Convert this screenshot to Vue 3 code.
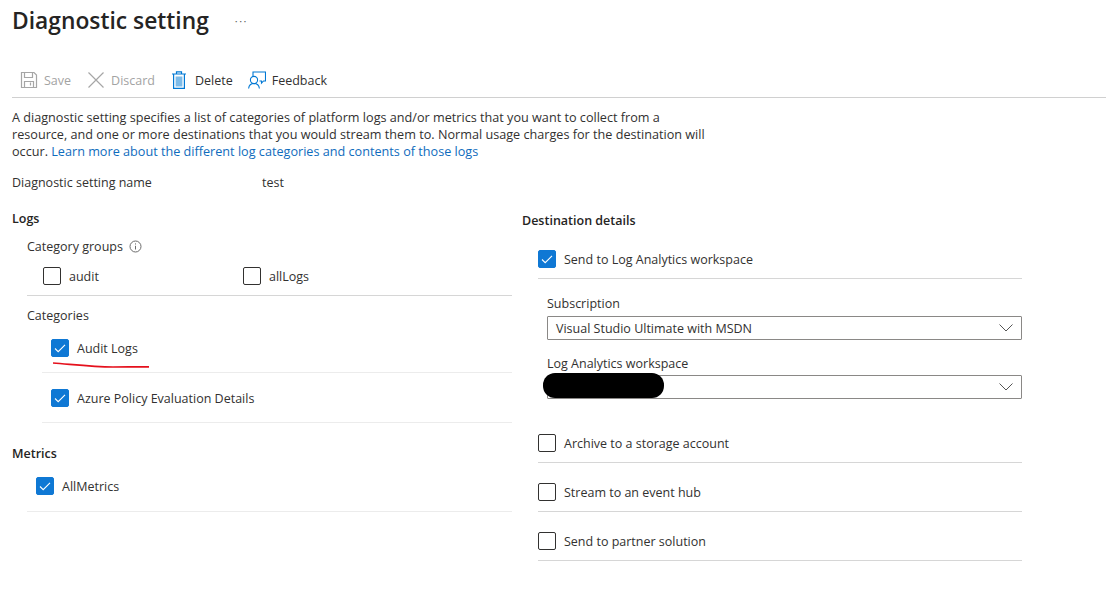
<script setup>
const description = 'A diagnostic setting specifies a list of categories of platform logs and/or metrics that you want to collect from a resource, and one or more destinations that you would stream them to. Normal usage charges for the destination will occur.'
const destinations = ['Archive to a storage account', 'Stream to an event hub', 'Send to partner solution']
</script>

<template>
  <div class="page">
    <header class="title-row">
      <h1>Diagnostic setting</h1>
      <span class="more">···</span>
    </header>

    <div class="toolbar">
      <div class="tool off">
        <svg width="18" height="18" viewBox="0 0 18 18" fill="none" stroke="#a6a6a6" stroke-width="1.2">
          <path d="M1.5 1.5h12.5l2.5 2.5v12.5h-15z" />
          <path d="M4.5 1.5v5h8v-5M4.5 16.5v-6h9v6M10.5 11.5v3" />
        </svg>
        <span>Save</span>
      </div>
      <div class="tool off discard">
        <svg width="18" height="18" viewBox="0 0 18 18" fill="none" stroke="#a6a6a6" stroke-width="1.2">
          <path d="M1.5 1.5l15 15M16.5 1.5l-15 15" />
        </svg>
        <span>Discard</span>
      </div>
      <div class="tool delete">
        <svg width="14" height="18" viewBox="0 0 14 18" fill="none" stroke="#0078d4" stroke-width="1.2">
          <path d="M0 3h14M4.5 3V.8h5V3M1.6 3v14.4h10.8V3" />
          <rect x="3.600" y="5.500" width="6.800" height="10" fill="#7dbbe8" stroke="none" />
        </svg>
        <span>Delete</span>
      </div>
      <div class="tool">
        <svg width="18" height="18" viewBox="0 0 18 18" fill="none" stroke="#0078d4" stroke-width="1.1">
          <path d="M5 5V1h12.500v9h-2l-2 2.200V10h-2" />
          <circle cx="6" cy="9" r="3.600" />
          <path d="M.6 17.500c.4-3.400 2.600-5 5.400-5s5 1.600 5.400 5" />
        </svg>
        <span>Feedback</span>
      </div>
    </div>

    <p class="intro">
      {{ description }}
      <a href="#">Learn more about the different log categories and contents of those logs</a>
    </p>

    <div class="name-row">
      <span class="name-label">Diagnostic setting name</span>
      <span>test</span>
    </div>

    <div class="columns">
      <section class="left">
        <h2 class="logs-head">Logs</h2>
        <div class="groups-label">
          Category groups
          <svg width="13" height="13" viewBox="0 0 13 13" fill="none" stroke="#6b6b6b">
            <circle cx="6.500" cy="6.500" r="5.500" />
            <path d="M6.500 5.800v3.700M6.500 3.400v1.100" />
          </svg>
        </div>
        <div class="groups">
          <label class="check group"><span class="box"></span>audit</label>
          <label class="check group"><span class="box"></span>allLogs</label>
        </div>
        <div class="cat-label">Categories</div>
        <div class="cat-row first">
          <label class="check"><span class="box on"><svg width="14" height="14" viewBox="0 0 14 14"><path d="M2 7.500l3.200 3.200L12 3.800" fill="none" stroke="#fff" stroke-width="1.1" /></svg></span>Audit Logs</label>
          <svg class="scribble" width="100" height="8" viewBox="0 0 100 8">
            <path d="M1 2c20 1.500 40 3.800 60 4 12 0 25-.3 36-.2" fill="none" stroke="#e5101c" stroke-width="1.700" />
          </svg>
        </div>
        <div class="cat-row second">
          <label class="check"><span class="box on"><svg width="14" height="14" viewBox="0 0 14 14"><path d="M2 7.500l3.200 3.200L12 3.800" fill="none" stroke="#fff" stroke-width="1.1" /></svg></span>Azure Policy Evaluation Details</label>
        </div>
        <h2 class="metrics-head">Metrics</h2>
        <div class="metric-row">
          <label class="check"><span class="box on"><svg width="14" height="14" viewBox="0 0 14 14"><path d="M2 7.500l3.200 3.200L12 3.800" fill="none" stroke="#fff" stroke-width="1.1" /></svg></span>AllMetrics</label>
        </div>
      </section>

      <section class="right">
        <h2 class="dest-head">Destination details</h2>
        <div class="dest">
          <label class="check"><span class="box on"><svg width="14" height="14" viewBox="0 0 14 14"><path d="M2 7.500l3.200 3.200L12 3.800" fill="none" stroke="#fff" stroke-width="1.1" /></svg></span>Send to Log Analytics workspace</label>
        </div>
        <div class="fields">
          <div class="field-label">Subscription</div>
          <div class="select">
            <span>Visual Studio Ultimate with MSDN</span>
            <svg width="14" height="8" viewBox="0 0 14 8"><path d="M.5.5L7 7l6.500-6.500" fill="none" stroke="#555" /></svg>
          </div>
          <div class="field-label second-label">Log Analytics workspace</div>
          <div class="select masked">
            <span class="blob"></span>
            <svg width="14" height="8" viewBox="0 0 14 8"><path d="M.5.5L7 7l6.500-6.500" fill="none" stroke="#555" /></svg>
          </div>
        </div>
        <div v-for="d in destinations" :key="d" class="dest plain">
          <label class="check"><span class="box"></span>{{ d }}</label>
        </div>
      </section>
    </div>
  </div>
</template>

<style>
html, body {
  background: #fff;
}
</style>

<style scoped>
.page {
  width: 1106px;
  height: 606px;
  overflow: hidden;
  box-sizing: border-box;
  font-family: "Open Sans", "Noto Sans", sans-serif;
  font-size: 12.500px;
  line-height: 17px;
  color: #323130;
}
.title-row {
  display: flex;
  align-items: center;
  height: 44px;
  padding: 0 0 4px 12px;
  box-sizing: border-box;
}
h1 {
  margin: 0;
  font-size: 22.800px;
  font-weight: 600;
  color: #252423;
}
.more {
  margin-left: 26px;
  font-size: 11px;
  letter-spacing: 1.500px;
  color: #605e5c;
}
.toolbar {
  display: flex;
  align-items: center;
  height: 36px;
  margin: 18px 0 0 12px;
  padding: 1px 0 0 8px;
  box-sizing: border-box;
  border-bottom: 1px solid #d0d0d0;
}
.tool {
  display: flex;
  align-items: center;
  gap: 6px;
  margin-right: 16px;
}
.tool.off {
  color: #a3a3a3;
}
.tool.discard {
  margin-right: 17px;
}
.tool.delete {
  gap: 9px;
  margin-right: 15px;
}
.intro {
  width: 706px;
  margin: 11px 0 0 12px;
  font-size: 12.650px;
}
a {
  color: #0f6cbd;
  text-decoration: none;
}
.name-row {
  display: flex;
  margin: 14px 0 0 12px;
}
.name-label {
  width: 250px;
}
.columns {
  display: flex;
  margin-top: 19px;
}
h2 {
  margin: 0;
  font-size: 12.500px;
  font-weight: 600;
  color: #252423;
}
.left {
  width: 512px;
  margin-right: 10px;
}
.logs-head {
  margin-left: 12px;
}
.groups-label {
  display: flex;
  align-items: center;
  gap: 6px;
  margin: 11px 0 0 27px;
}
.groups {
  display: flex;
  align-items: flex-start;
  height: 41px;
  margin-left: 27px;
  padding: 12px 0 0 16px;
  box-sizing: border-box;
  border-bottom: 1px solid #d6d6d6;
}
.group {
  width: 200px;
}
.check {
  display: flex;
  align-items: center;
  gap: 8px;
}
.box {
  display: flex;
  align-items: center;
  justify-content: center;
  width: 18px;
  height: 18px;
  box-sizing: border-box;
  border: 1px solid #323130;
  border-radius: 2px;
  flex: none;
}
.box.on {
  background: #0f78d4;
  border-color: #0f78d4;
}
.cat-label {
  margin: 11px 0 0 27px;
}
.cat-row {
  position: relative;
  margin-left: 42px;
  padding-left: 9px;
  box-sizing: border-box;
  border-bottom: 1px solid #ececec;
}
.cat-row.first {
  height: 49px;
  padding-top: 15px;
}
.cat-row.second {
  height: 50px;
  padding-top: 16px;
}
.scribble {
  position: absolute;
  left: 10px;
  top: 37px;
}
.metrics-head {
  margin: 22px 0 0 12px;
}
.metric-row {
  height: 50px;
  margin-left: 27px;
  padding: 15px 0 0 9px;
  box-sizing: border-box;
  border-bottom: 1px solid #ececec;
}
.right {
  width: 500px;
}
.dest-head {
  margin-top: 2px;
}
.dest {
  width: 484px;
  height: 50px;
  margin-left: 16px;
  padding-top: 21px;
  box-sizing: border-box;
  border-bottom: 1px solid #d6d6d6;
}
.dest.plain {
  height: 49px;
  padding-top: 20px;
}
.fields {
  margin: 16px 0 0 25px;
  width: 475px;
  height: 119px;
}
.field-label {
  margin-bottom: 4px;
}
.second-label {
  margin-top: 15px;
  margin-bottom: 3px;
}
.select {
  position: relative;
  display: flex;
  align-items: center;
  justify-content: space-between;
  height: 24px;
  box-sizing: border-box;
  padding: 0 8px;
  border: 1px solid #8a8886;
  border-radius: 1px;
}
.select.masked {
  justify-content: flex-end;
}
.blob {
  position: absolute;
  left: -5px;
  top: -3px;
  width: 121px;
  height: 25px;
  background: #000;
  border-radius: 12px;
}
</style>
